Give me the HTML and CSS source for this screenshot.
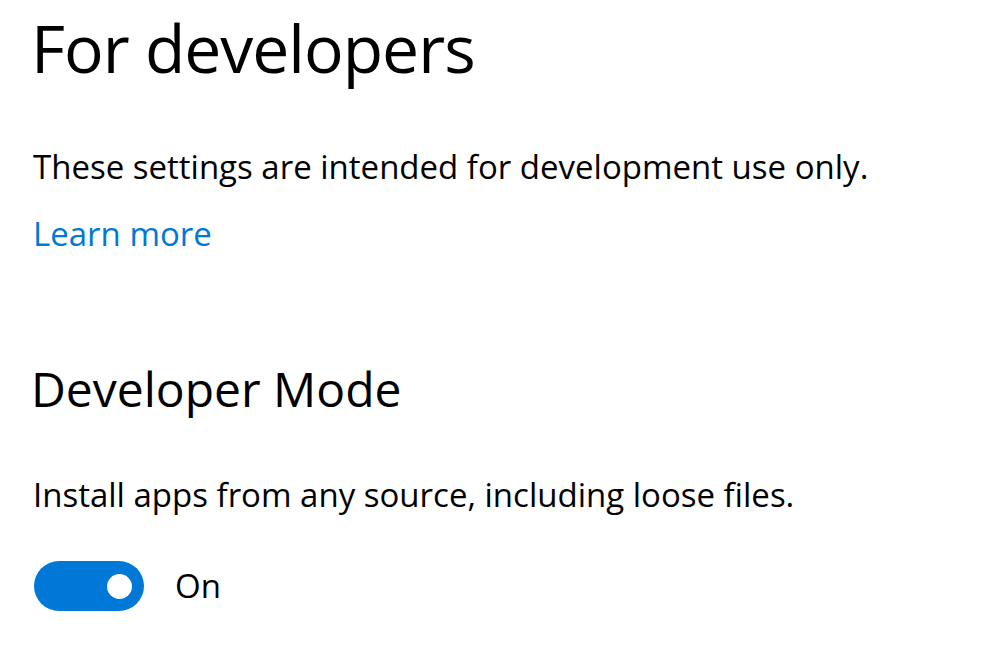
FILE: index.html
```html
<!DOCTYPE html>
<html lang="en">
<head>
<meta charset="utf-8">
<title>For developers</title>
<link rel="stylesheet" href="styles.css">
</head>
<body>
<main class="page">
  <h1 class="title">For developers</h1>
  <p class="desc">These settings are intended for development use only.</p>
  <a class="link" href="#">Learn more</a>
  <h2 class="section">Developer Mode</h2>
  <p class="desc desc-install">Install apps from any source, including loose files.</p>
  <div class="toggle-row">
    <span class="toggle"><span class="knob"></span></span>
    <span class="toggle-label">On</span>
  </div>
</main>
</body>
</html>
```
FILE: styles.css
```css
html, body {
  margin: 0;
  padding: 0;
  background: #ffffff;
}
body {
  font-family: "Open Sans", "Noto Sans", sans-serif;
  color: #000000;
}
.page {
  display: flex;
  flex-direction: column;
  align-items: flex-start;
  padding: 4px 0 0 30px;
}
.title {
  margin: 0 0 0 1px;
  font-size: 66px;
  font-weight: 400;
  letter-spacing: -1px;
  line-height: 86px;
}
.desc {
  margin: 57px 0 0 3px;
  font-size: 33px;
  line-height: 40px;
}
.link {
  margin: 27px 0 0 3px;
  font-size: 33px;
  line-height: 40px;
  color: #0078d7;
  text-decoration: none;
}
.section {
  margin: 105px 0 0 1px;
  font-size: 48px;
  font-weight: 400;
  line-height: 60px;
}
.desc-install {
  margin-top: 56px;
}
.toggle-row {
  display: flex;
  align-items: center;
  gap: 31px;
  margin: 46px 0 0 4px;
}
.toggle {
  display: flex;
  align-items: center;
  justify-content: flex-end;
  box-sizing: border-box;
  width: 110px;
  height: 50px;
  padding-right: 12px;
  border-radius: 25px;
  background: #0078d7;
}
.knob {
  width: 25px;
  height: 25px;
  border-radius: 50%;
  background: #ffffff;
}
.toggle-label {
  font-size: 33px;
  line-height: 40px;
}
```
